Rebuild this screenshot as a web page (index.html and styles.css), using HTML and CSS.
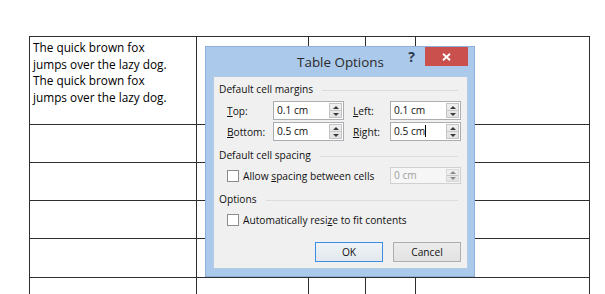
FILE: index.html
```html
<!DOCTYPE html>
<html>
<head>
<meta charset="utf-8">
<link rel="stylesheet" href="styles.css">
</head>
<body>
<div class="doc">
  <div class="table">
    <div class="cell text">The quick brown fox<br>jumps over the lazy dog.<br>The quick brown fox<br>jumps over the lazy dog.</div>
    <div class="cell"></div><div class="cell"></div><div class="cell"></div><div class="cell"></div>
    <div class="cell"></div><div class="cell"></div><div class="cell"></div><div class="cell"></div><div class="cell"></div>
    <div class="cell"></div><div class="cell"></div><div class="cell"></div><div class="cell"></div><div class="cell"></div>
    <div class="cell"></div><div class="cell"></div><div class="cell"></div><div class="cell"></div><div class="cell"></div>
    <div class="cell"></div><div class="cell"></div><div class="cell"></div><div class="cell"></div><div class="cell"></div>
    <div class="cell last"></div><div class="cell last"></div><div class="cell last"></div><div class="cell last"></div><div class="cell last"></div>
  </div>
</div>

<div class="dialog">
  <div class="titlebar">
    <div></div>
    <div class="title">Table Options</div>
    <div class="controls">
      <span class="help">?</span>
      <span class="close"><svg width="9" height="8" viewBox="0 0 9 8"><path d="M1 0.8 L8 7.2 M8 0.8 L1 7.2" stroke="#fff" stroke-width="1.9" fill="none"/></svg></span>
    </div>
  </div>
  <div class="panel">
    <div class="group-head"><span>Default cell margins</span><i class="rule"></i></div>
    <div class="margins">
      <span class="lbl"><u>T</u>op:</span>
      <div class="spin"><span class="val">0.1 cm</span><span class="arrows"><i class="up"></i><i class="dn"></i></span></div>
      <span class="lbl lbl-r"><u>L</u>eft:</span>
      <div class="spin"><span class="val">0.1 cm</span><span class="arrows"><i class="up"></i><i class="dn"></i></span></div>
      <span class="lbl"><u>B</u>ottom:</span>
      <div class="spin"><span class="val">0.5 cm</span><span class="arrows"><i class="up"></i><i class="dn"></i></span></div>
      <span class="lbl lbl-r"><u>R</u>ight:</span>
      <div class="spin"><span class="val">0.5 cm<span class="caret"></span></span><span class="arrows"><i class="up"></i><i class="dn"></i></span></div>
    </div>
    <div class="group-head gh2"><span>Default cell spacing</span><i class="rule"></i></div>
    <div class="check-row">
      <span class="box"></span><span>Allow <u>s</u>pacing between cells</span>
      <div class="spin short disabled"><span class="val">0 cm</span><span class="arrows"><i class="up"></i><i class="dn"></i></span></div>
    </div>
    <div class="group-head gh3"><span>Options</span><i class="rule"></i></div>
    <div class="check-row cr2">
      <span class="box"></span><span>Automatically resi<u>z</u>e to fit contents</span>
    </div>
    <div class="buttons">
      <span class="btn default">OK</span>
      <span class="btn">Cancel</span>
    </div>
  </div>
</div>
</body>
</html>
```

FILE: styles.css
```css
html, body {
  margin: 0;
  padding: 0;
  height: 294px;
  overflow: hidden;
  background: #fff;
}
body {
  position: relative;
  font-family: "Open Sans", "Noto Sans", sans-serif;
}
.doc {
  padding: 36px 0 0 29px;
}
.table {
  display: grid;
  grid-template-columns: 167px 112px 57px 50px 174px;
  grid-template-rows: 88px 38px 38px 38px 39px 16px;
  width: max-content;
  border-left: 1px solid #2e2e2e;
  border-top: 1px solid #2e2e2e;
}
.cell {
  box-sizing: border-box;
  border-right: 1px solid #2e2e2e;
  border-bottom: 1px solid #2e2e2e;
}
.cell.last { border-bottom: 0; }
.text {
  padding: 2px 0 0 3px;
  font-size: 11.8px;
  line-height: 16.7px;
  color: #000;
  white-space: nowrap;
}

.dialog {
  position: absolute;
  left: 205px;
  top: 46px;
  width: 270px;
  height: 231px;
  box-sizing: border-box;
  background: #abc9ea;
  border: 1px solid #8eb0d8;
  padding: 0 6px 7px 7px;
  display: flex;
  flex-direction: column;
  font-size: 10.2px;
  color: #111;
}
.titlebar {
  height: 29px;
  display: grid;
  grid-template-columns: 1fr auto 1fr;
  align-items: center;
}
.title {
  font-size: 13.4px;
  color: #2a2a2a;
  line-height: 18px;
}
.controls {
  align-self: start;
  display: flex;
  justify-content: flex-end;
  align-items: center;
  height: 19px;
}
.help {
  font-weight: 700;
  font-size: 14px;
  color: #2d3b4e;
  margin-right: 10px;
  line-height: 19px;
}
.close {
  width: 43px;
  height: 19px;
  background: #c9504d;
  display: flex;
  align-items: center;
  justify-content: center;
}
.close svg { display: block; }

.panel {
  flex: 1;
  background: #f0f0f0;
  border: 1px solid #b4cbe6;
  padding: 5px 6px 0 5px;
  display: flex;
  flex-direction: column;
}
.group-head {
  display: flex;
  align-items: center;
  height: 14px;
  line-height: 14px;
}
.rule {
  flex: 1;
  height: 0;
  border-top: 1px solid #dcdcdc;
  margin: 2px 3px 0 9px;
}
.gh2 { margin-top: 7px; }
.gh3 { margin-top: 8px; }

.margins {
  margin: 5px 0 0 8px;
  display: grid;
  grid-template-columns: 46px 71px 46px 71px;
  grid-auto-rows: 19px;
  row-gap: 2px;
  align-items: center;
}
.lbl-r { padding-left: 9px; }

.spin {
  box-sizing: border-box;
  height: 19px;
  border: 1px solid #abadb3;
  background: #fff;
  display: flex;
}
.spin .val {
  flex: 1;
  padding-left: 3px;
  line-height: 17px;
  white-space: nowrap;
}
.caret {
  display: inline-block;
  width: 1px;
  height: 12px;
  background: #000;
  vertical-align: -2px;
}
.arrows {
  width: 11px;
  margin: 1px 1px 1px 0;
  border: 1px solid #c4c4c4;
  background: linear-gradient(#f0f0f0, #e2e2e2);
  display: flex;
  flex-direction: column;
}
.arrows i {
  flex: 1;
  display: flex;
  align-items: center;
  justify-content: center;
}
.arrows i + i { border-top: 1px solid #c8c8c8; }
.arrows .up::before {
  content: "";
  border-left: 3px solid transparent;
  border-right: 3px solid transparent;
  border-bottom: 3px solid #3a3a3a;
}
.arrows .dn::before {
  content: "";
  border-left: 3px solid transparent;
  border-right: 3px solid transparent;
  border-top: 3px solid #3a3a3a;
}
.spin.short {
  width: 71px;
  height: 17px;
  margin-left: auto;
}
.spin.short .val { line-height: 15px; }
.spin.disabled {
  border-color: #d0d0d0;
  background: #f6f6f6;
  color: #a0a0a0;
}
.spin.disabled .arrows { border-color: #d8d8d8; }
.spin.disabled .arrows .up::before { border-bottom-color: #8a8a8a; }
.spin.disabled .arrows .dn::before { border-top-color: #8a8a8a; }

.check-row {
  margin: 5px 0 0 8px;
  height: 17px;
  display: flex;
  align-items: center;
}
.box {
  box-sizing: border-box;
  width: 12px;
  height: 12px;
  border: 1px solid #8c8c8c;
  background: #fff;
  margin-right: 4px;
}

.buttons {
  margin-top: 14px;
  display: flex;
  justify-content: flex-end;
  gap: 10px;
}
.btn {
  box-sizing: border-box;
  width: 68px;
  height: 20px;
  border: 1px solid #adadad;
  background: linear-gradient(#ececec, #e2e2e2);
  display: flex;
  align-items: center;
  justify-content: center;
  color: #111;
}
.btn.default {
  border-color: #3c8fe0;
  background: linear-gradient(#eef3f8, #e3e8ee);
}
```
